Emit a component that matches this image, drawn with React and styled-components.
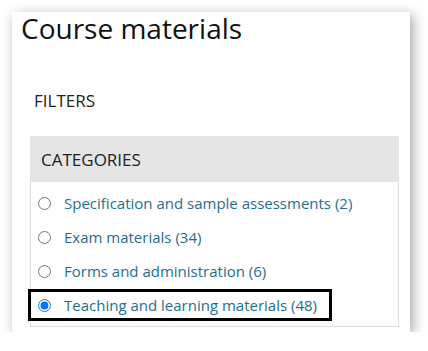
import * as React from "react";
import styled, { createGlobalStyle } from "styled-components";

const GlobalStyle = createGlobalStyle`
  html, body {
    margin: 0;
    padding: 0;
    background: #fff;
  }
  body {
    font-family: "Open Sans", "Liberation Sans", sans-serif;
  }
`;

const Card = styled.div`
  margin: 12px 0 0 12px;
  width: 398px;
  height: 320px;
  background: #fff;
  box-shadow: 3px 3px 12px rgba(0, 0, 0, 0.35);
  box-sizing: border-box;
  padding: 0 11px 0 9px;
`;

const Title = styled.h1`
  margin: 0;
  font-size: 28px;
  font-weight: 400;
  line-height: 32px;
  color: #111;
`;

const FiltersLabel = styled.h2`
  margin: 45px 0 0 13px;
  font-size: 17px;
  font-weight: 400;
  line-height: 24px;
  color: #222;
`;

const Panel = styled.div`
  margin: 23px 0 0 9px;
  border: 1px solid #ddd;
  border-top: none;
`;

const PanelHeader = styled.div`
  height: 46px;
  margin: 0 -1px;
  background: #e5e5e5;
  display: flex;
  align-items: center;
  padding-left: 11px;
  font-size: 17px;
  color: #222;
`;

const OptionList = styled.div`
  display: flex;
  flex-direction: column;
  align-items: flex-start;
  gap: 8px;
  padding: 8px 0 8px 0;
`;

const Option = styled.label`
  display: inline-flex;
  align-items: center;
  height: 26px;
  padding: 0 12px 0 7px;
  gap: 13px;
  font-size: 15px;
  color: #1f6f8b;
  cursor: pointer;
  outline: ${(p) => (p.$highlighted ? "3px solid #000" : "none")};

  input {
    margin: 0;
    width: 13px;
    height: 13px;
  }
`;

const categories = [
  { label: "Specification and sample assessments", count: 2 },
  { label: "Exam materials", count: 34 },
  { label: "Forms and administration", count: 6 },
  { label: "Teaching and learning materials", count: 48 },
];

export default function App() {
  const [selected, setSelected] = React.useState(3);
  return (
    <>
      <GlobalStyle />
      <Card>
        <Title>Course materials</Title>
        <FiltersLabel>FILTERS</FiltersLabel>
        <Panel>
          <PanelHeader>CATEGORIES</PanelHeader>
          <OptionList>
            {categories.map((c, i) => (
              <Option key={c.label} $highlighted={i === 3}>
                <input
                  type="radio"
                  name="category"
                  checked={selected === i}
                  onChange={() => setSelected(i)}
                />
                <span>
                  {c.label} ({c.count})
                </span>
              </Option>
            ))}
          </OptionList>
        </Panel>
      </Card>
    </>
  );
}
